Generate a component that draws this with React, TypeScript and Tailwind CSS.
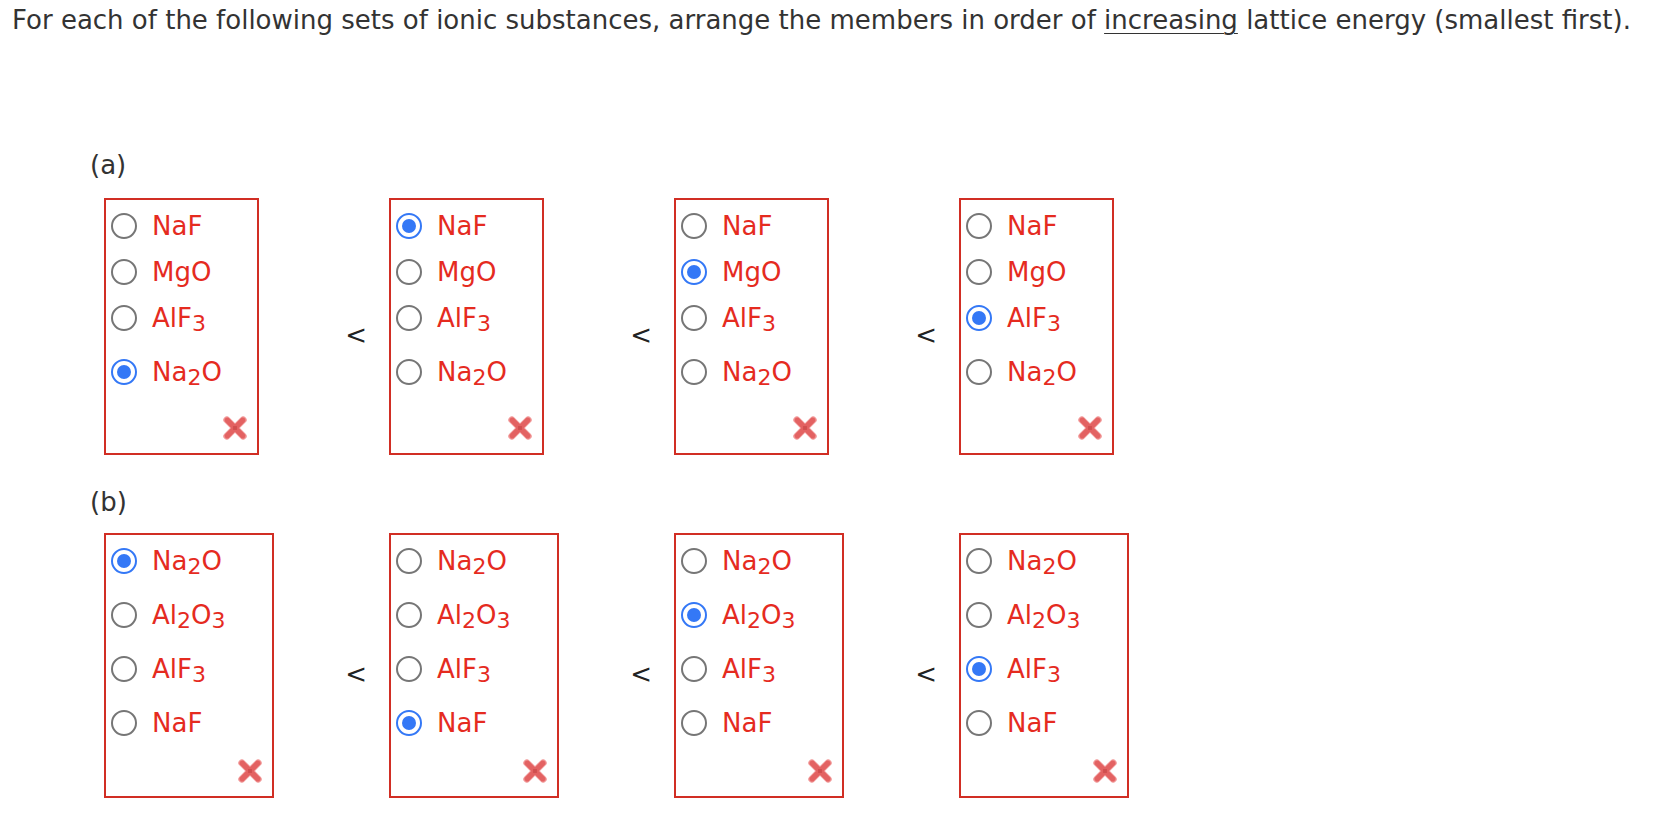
import type { ReactNode } from 'react'

type Option = { label: ReactNode }

// formula pieces: subscript digits sit lower and grow the line a bit, as in the original page
const Sub = ({ children }: { children: ReactNode }) => (
  <span className="align-[-4px] text-[22px] leading-[34px]">{children}</span>
)

const NaF = <>NaF</>
const MgO = <>MgO</>
const AlF3 = <>AlF<Sub>3</Sub></>
const Na2O = <>Na<Sub>2</Sub>O</>
const Al2O3 = <>Al<Sub>2</Sub>O<Sub>3</Sub></>

interface Group {
  items: Option[]
  picks: number[] // selected index per box
  width: string
}

const groups: { tag: string; group: Group; top: string }[] = [
  {
    tag: '(a)',
    top: 'mt-[115px]',
    group: {
      items: [{ label: NaF }, { label: MgO }, { label: AlF3 }, { label: Na2O }],
      picks: [3, 0, 1, 2],
      width: 'w-[155px]',
    },
  },
  {
    tag: '(b)',
    top: 'mt-[32px]',
    group: {
      items: [{ label: Na2O }, { label: Al2O3 }, { label: AlF3 }, { label: NaF }],
      picks: [0, 3, 1, 2],
      width: 'w-[170px]',
    },
  },
]

function Radio({ checked }: { checked: boolean }) {
  if (checked) {
    return (
      <span className="mt-[2px] flex h-[26px] w-[26px] shrink-0 items-center justify-center rounded-full border-[2.5px] border-[#3478f6] bg-white">
        <span className="h-[14px] w-[14px] rounded-full bg-[#3478f6]" />
      </span>
    )
  }
  return <span className="mt-[2px] h-[26px] w-[26px] shrink-0 rounded-full border-2 border-[#767676] bg-white" />
}

function WrongMark() {
  return (
    <svg width="26" height="26" viewBox="0 0 24 24" className="opacity-90">
      <path d="M4.5 4.5 L19.5 19.5 M19.5 4.5 L4.5 19.5" stroke="#f08a8a" strokeWidth="6.5" strokeLinecap="round" />
      <path d="M4.8 4.8 L19.2 19.2 M19.2 4.8 L4.8 19.2" stroke="#e05252" strokeWidth="4.8" strokeLinecap="round" />
      <rect x="10.2" y="10.2" width="3.6" height="3.6" fill="#cc3d3d" />
    </svg>
  )
}

function AnswerBox({ items, pick, width }: { items: Option[]; pick: number; width: string }) {
  return (
    <div className={`${width} shrink-0 border-2 border-[#d12e24] pt-[3px]`}>
      {items.map((it, i) => (
        <div key={i} className="flex items-start py-[8px] pl-[5px]">
          <Radio checked={i === pick} />
          <span className="ml-[15px] leading-[30px] text-[#e52b1f]">{it.label}</span>
        </div>
      ))}
      <div className="mt-[12px] flex justify-end pb-[12px] pr-[9px]">
        <WrongMark />
      </div>
    </div>
  )
}

export default function App() {
  return (
    <div className="min-h-screen bg-white font-['DejaVu_Sans',Verdana,sans-serif] text-[26px] leading-[30px] text-[#333]">
      <p className="pl-[12px] pt-[5px]">
        For each of the following sets of ionic substances, arrange the members in order of{' '}
        <span className="underline decoration-1 underline-offset-[4px]">increasing</span> lattice energy (smallest first).
      </p>

      {groups.map(({ tag, group, top }) => (
        <section key={tag} className={`${top} pl-[90px]`}>
          <div>{tag}</div>
          <div className={`${tag === '(a)' ? 'mt-[18px]' : 'mt-[16px]'} flex pl-[14px]`}>
            {group.picks.map((pick, k) => (
              <div key={k} className="flex w-[285px] shrink-0 items-center">
                <AnswerBox items={group.items} pick={pick} width={group.width} />
                {k < 3 && <span className="ml-auto mr-[22px] mt-[16px] text-[#222]">&lt;</span>}
              </div>
            ))}
          </div>
        </section>
      ))}
    </div>
  )
}
